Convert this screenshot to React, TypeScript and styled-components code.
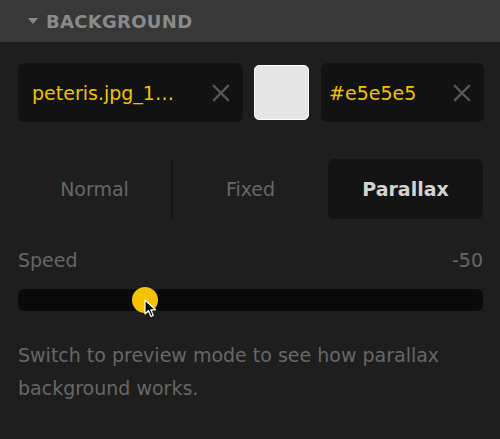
import React from 'react';
import styled, { createGlobalStyle } from 'styled-components';

const GlobalStyle = createGlobalStyle`
  html, body {
    margin: 0;
    padding: 0;
    background: #1e1e1e;
  }
  body {
    font-family: "DejaVu Sans", "Liberation Sans", sans-serif;
  }
`;

const StPanel = styled.div`
  width: 500px;
  height: 439px;
  background: #1e1e1e;
  overflow: hidden;
`;

const StHeader = styled.header`
  height: 42px;
  background: #383838;
  display: flex;
  align-items: center;
  padding-left: 28px;
  gap: 8px;
  h2 {
    margin: 0;
    font-size: 18px;
    font-weight: bold;
    color: #8a8a8a;
    letter-spacing: 0.3px;
  }
`;

const StCaret = styled.span`
  width: 0;
  height: 0;
  border-left: 5px solid transparent;
  border-right: 5px solid transparent;
  border-top: 6px solid #8a8a8a;
`;

const StBody = styled.div`
  padding: 21px 16px 0 18px;
`;

const StRow = styled.div`
  display: flex;
  align-items: center;
  gap: 11px;
`;

const StField = styled.div<{ $width: number; $pad: number }>`
  width: ${(p) => p.$width}px;
  height: 59px;
  box-sizing: border-box;
  background: #121212;
  border-radius: 6px;
  display: flex;
  align-items: center;
  justify-content: space-between;
  padding: 0 13px 0 ${(p) => p.$pad}px;
  color: #f0c300;
  font-size: 19px;
  span {
    white-space: nowrap;
  }
`;

const StSwatch = styled.div`
  width: 55px;
  height: 55px;
  box-sizing: border-box;
  background: #e5e5e5;
  border: 1.5px solid #ffffff;
  border-radius: 5px;
  margin-right: 1px;
`;

const StSegments = styled.div`
  margin-top: 37px;
  width: 465px;
  height: 60px;
  display: grid;
  grid-template-columns: repeat(3, 1fr);
`;

const StSegment = styled.div<{ $active?: boolean; $divider?: boolean }>`
  display: flex;
  align-items: center;
  justify-content: center;
  font-size: 19px;
  color: ${(p) => (p.$active ? '#d2d2d2' : '#676767')};
  font-weight: ${(p) => (p.$active ? 600 : 'normal')};
  background: ${(p) => (p.$active ? '#131313' : 'transparent')};
  border-radius: ${(p) => (p.$active ? '6px' : '0')};
  border-right: ${(p) => (p.$divider ? '2px solid #121212' : 'none')};
`;

const StLabelRow = styled.div`
  margin-top: 30px;
  width: 465px;
  display: flex;
  justify-content: space-between;
  font-size: 19px;
  line-height: 22px;
  color: #676767;
`;

const StTrack = styled.div`
  position: relative;
  margin-top: 18px;
  width: 465px;
  height: 22px;
  background: #0a0a0a;
  border-radius: 6px;
`;

const StThumb = styled.div`
  position: absolute;
  top: -2px;
  width: 26px;
  height: 26px;
  border-radius: 50%;
  background: #f5c200;
`;

const StCursor = styled.svg`
  position: absolute;
  top: 10px;
`;

const StHelp = styled.p`
  margin: 28px 0 0 0;
  width: 465px;
  font-size: 19px;
  line-height: 33px;
  color: #676767;
`;

function CloseIcon() {
  return (
    <svg width="18" height="18" viewBox="0 0 18 18">
      <path d="M2 2 L16 16 M16 2 L2 16" stroke="#575757" strokeWidth="2.4" strokeLinecap="square" />
    </svg>
  );
}

function App() {
  const speed = -50;
  const thumbLeft = 114;
  return (
    <StPanel>
      <GlobalStyle />
      <StHeader>
        <StCaret />
        <h2>BACKGROUND</h2>
      </StHeader>
      <StBody>
        <StRow>
          <StField $width={227} $pad={14}>
            <span>peteris.jpg_1…</span>
            <CloseIcon />
          </StField>
          <StSwatch />
          <StField $width={164} $pad={8}>
            <span>#e5e5e5</span>
            <CloseIcon />
          </StField>
        </StRow>
        <StSegments>
          <StSegment $divider>Normal</StSegment>
          <StSegment>Fixed</StSegment>
          <StSegment $active>Parallax</StSegment>
        </StSegments>
        <StLabelRow>
          <span>Speed</span>
          <span>{speed}</span>
        </StLabelRow>
        <StTrack>
          <StThumb style={{ left: thumbLeft }} />
          <StCursor style={{ left: thumbLeft + 12 }} width="13" height="20" viewBox="0 0 13 20">
            <path d="M1 1 L1 15 L4.5 11.5 L7 17.5 L9.3 16.5 L6.8 10.8 L11.5 10.8 Z" fill="#000" stroke="#fff" strokeWidth="1.2" strokeLinejoin="round" />
          </StCursor>
        </StTrack>
        <StHelp>Switch to preview mode to see how parallax background works.</StHelp>
      </StBody>
    </StPanel>
  );
}

export default App;
